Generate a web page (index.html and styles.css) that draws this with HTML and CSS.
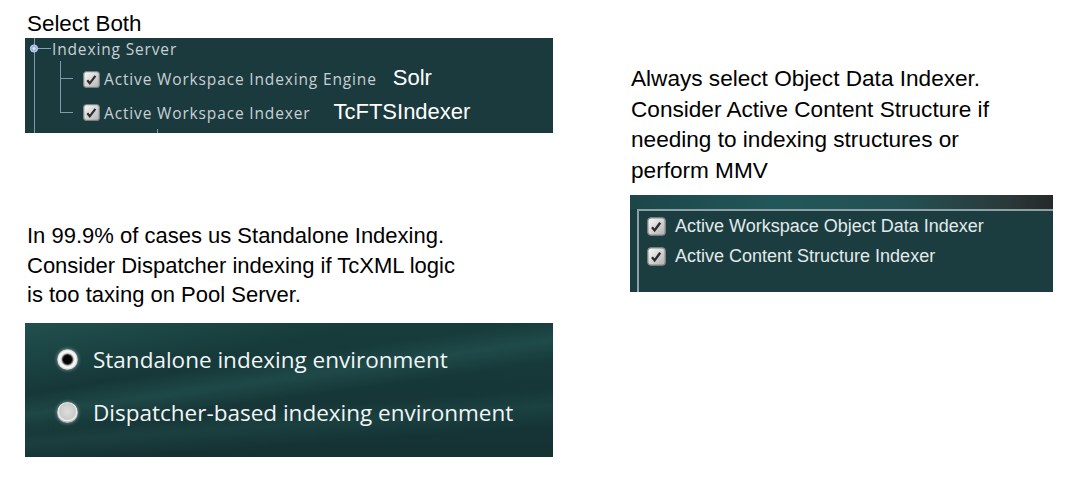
FILE: index.html
```html
<!DOCTYPE html>
<html lang="en">
<head>
<meta charset="utf-8">
<title>Indexing options</title>
<link rel="stylesheet" href="styles.css">
</head>
<body>
<div class="page">
  <div class="col-left">
    <p class="caption">Select Both</p>
    <div class="tree">
      <div class="tree-head">
        <svg class="node" viewBox="0 0 26 22" width="26" height="22">
          <line x1="12" y1="10.5" x2="26" y2="10.5" stroke="#8aa3b6" stroke-width="1"/>
          <circle cx="9" cy="10.5" r="3.6" fill="#9db3e6" stroke="#c9d6f5" stroke-width="1"/>
          <circle cx="9" cy="10.5" r="1.3" fill="#e9eefc"/>
        </svg>
        <span class="tree-label">Indexing Server</span>
      </div>
      <div class="tree-row">
        <svg class="cb cb-sm" viewBox="0 0 17 17" width="17" height="17">
          <defs><linearGradient id="g1" x1="0" y1="0" x2="1" y2="1"><stop offset="0" stop-color="#fbfbfb"/><stop offset="1" stop-color="#b3b3b3"/></linearGradient></defs>
          <rect x="0.75" y="0.75" width="15.5" height="15.5" rx="2.6" fill="url(#g1)" stroke="#8a8a8a" stroke-width="1.2"/>
          <path d="M4.3 9.2 L6.8 12.3 L12.4 4.9" fill="none" stroke="#2e2e2e" stroke-width="2.2"/>
        </svg>
        <span class="tree-label">Active Workspace Indexing Engine</span>
        <span class="annot annot-solr">Solr</span>
      </div>
      <div class="tree-row">
        <svg class="cb cb-sm" viewBox="0 0 17 17" width="17" height="17">
          <defs><linearGradient id="g2" x1="0" y1="0" x2="1" y2="1"><stop offset="0" stop-color="#fbfbfb"/><stop offset="1" stop-color="#b3b3b3"/></linearGradient></defs>
          <rect x="0.75" y="0.75" width="15.5" height="15.5" rx="2.6" fill="url(#g2)" stroke="#8a8a8a" stroke-width="1.2"/>
          <path d="M4.3 9.2 L6.8 12.3 L12.4 4.9" fill="none" stroke="#2e2e2e" stroke-width="2.2"/>
        </svg>
        <span class="tree-label">Active Workspace Indexer</span>
        <span class="annot annot-tc">TcFTSIndexer</span>
      </div>
    </div>

    <p class="note note-left">In 99.9% of cases us Standalone Indexing.<br>Consider Dispatcher indexing if TcXML logic<br>is too taxing on Pool Server.</p>

    <div class="env">
      <div class="env-row">
        <span class="radio radio-on"></span>
        <span class="env-label">Standalone indexing environment</span>
      </div>
      <div class="env-row">
        <span class="radio radio-off"></span>
        <span class="env-label">Dispatcher-based indexing environment</span>
      </div>
    </div>
  </div>

  <div class="col-right">
    <p class="note note-right">Always select Object Data Indexer.<br>Consider Active Content Structure if<br>needing to indexing structures or<br>perform MMV</p>

    <div class="idx">
      <div class="idx-frame">
        <div class="idx-row">
          <svg class="cb cb-lg" viewBox="0 0 19 19" width="19" height="19">
            <defs><linearGradient id="g3" x1="0" y1="0" x2="1" y2="1"><stop offset="0" stop-color="#fdfdfd"/><stop offset="1" stop-color="#adadad"/></linearGradient></defs>
            <rect x="0.8" y="0.8" width="17.4" height="17.4" rx="3.2" fill="url(#g3)" stroke="#858585" stroke-width="1.3"/>
            <path d="M5 10.3 L7.6 13.4 L13.2 5.8" fill="none" stroke="#2b2b2b" stroke-width="2.4"/>
          </svg>
          <span class="idx-label">Active Workspace Object Data Indexer</span>
        </div>
        <div class="idx-row">
          <svg class="cb cb-lg" viewBox="0 0 19 19" width="19" height="19">
            <defs><linearGradient id="g4" x1="0" y1="0" x2="1" y2="1"><stop offset="0" stop-color="#fdfdfd"/><stop offset="1" stop-color="#adadad"/></linearGradient></defs>
            <rect x="0.8" y="0.8" width="17.4" height="17.4" rx="3.2" fill="url(#g4)" stroke="#858585" stroke-width="1.3"/>
            <path d="M5 10.3 L7.6 13.4 L13.2 5.8" fill="none" stroke="#2b2b2b" stroke-width="2.4"/>
          </svg>
          <span class="idx-label">Active Content Structure Indexer</span>
        </div>
      </div>
    </div>
  </div>
</div>
</body>
</html>
```

FILE: styles.css
```css
html, body {
  margin: 0;
  padding: 0;
  background: #ffffff;
}

.page {
  display: flex;
  align-items: flex-start;
  padding-left: 25px;
  gap: 77px;
  font-family: "Liberation Sans", Arial, sans-serif;
  color: #000000;
}

.col-left {
  width: 528px;
  padding-top: 11px;
  display: flex;
  flex-direction: column;
}

.col-right {
  width: 423px;
  padding-top: 64px;
  display: flex;
  flex-direction: column;
}

.caption {
  margin: 0 0 2px 2px;
  font-size: 22.4px;
  line-height: 25px;
  white-space: nowrap;
}

.note {
  margin: 0;
  white-space: nowrap;
}

.note-left {
  margin: 88px 0 0 2px;
  font-size: 22px;
  line-height: 29.5px;
}

.note-right {
  margin: 0 0 0 1px;
  font-size: 22.6px;
  line-height: 30.5px;
}

/* ---------- Panel 1: tree ---------- */
.tree {
  height: 95px;
  box-sizing: border-box;
  background:
    linear-gradient(#7f99ad, #7f99ad) 9px 0 / 1px 100% no-repeat,
    linear-gradient(#7f99ad, #7f99ad) 35px 23px / 1px 52px no-repeat,
    linear-gradient(#7f99ad, #7f99ad) 35px 40px / 13px 1px no-repeat,
    linear-gradient(#7f99ad, #7f99ad) 35px 74px / 13px 1px no-repeat,
    linear-gradient(#7f99ad, #7f99ad) 132px 91px / 1px 4px no-repeat,
    #1b3a3e;
  display: flex;
  flex-direction: column;
}

.tree-head {
  height: 23px;
  display: flex;
  align-items: flex-start;
}

.node {
  flex: none;
  display: block;
}

.tree-label {
  font-family: "Open Sans", "Noto Sans", sans-serif;
  font-size: 15.5px;
  letter-spacing: 0.85px;
  color: #c8d0d4;
  line-height: 22px;
  white-space: nowrap;
}

.tree-head .tree-label {
  margin-left: 1px;
}

.tree-row {
  height: 33.5px;
  display: flex;
  align-items: baseline;
  padding-left: 58px;
  line-height: 33.5px;
}

.tree-row .tree-label {
  line-height: 33.5px;
  margin-left: 4px;
}

.cb {
  flex: none;
  display: block;
}

.cb-sm {
  align-self: flex-start;
  margin-top: 9.5px;
}

.annot {
  font-family: "Liberation Sans", Arial, sans-serif;
  font-size: 22px;
  color: #ffffff;
  white-space: nowrap;
}

.annot-solr { margin-left: 16px; }
.annot-tc { margin-left: 23px; }

/* ---------- Panel 3: environment radios ---------- */
.env {
  margin-top: 13.5px;
  height: 134px;
  box-sizing: border-box;
  padding: 10px 0 0 32px;
  background:
    linear-gradient(168deg, rgba(44, 104, 100, 0.45) 0%, rgba(44, 104, 100, 0) 30%),
    linear-gradient(172deg, rgba(0, 0, 0, 0) 34%, rgba(52, 118, 112, 0.28) 44%, rgba(0, 0, 0, 0) 54%),
    linear-gradient(176deg, rgba(0, 0, 0, 0) 60%, rgba(48, 110, 104, 0.2) 70%, rgba(0, 0, 0, 0) 82%),
    linear-gradient(180deg, #173c3c 0%, #163637 60%, #153233 100%);
}

.env-row {
  height: 53px;
  display: flex;
  align-items: center;
}

.radio {
  flex: none;
  width: 21px;
  height: 21px;
  border-radius: 50%;
  box-shadow: 0 0 3px 1px rgba(220, 235, 235, 0.3);
}

.radio-on {
  background: radial-gradient(circle, #050505 0 4px, #4a4a4a 5px, #d9d9d9 6.3px, #ffffff 7.8px, #e2e2e2 9.4px, #a9a9a9 10.5px);
}

.radio-off {
  background: radial-gradient(circle at 50% 45%, #dedede 0, #d2d2d2 5px, #c9c9c9 7.8px, #f0f0f0 9.4px, #b8b8b8 10.5px);
}

.env-label {
  margin-left: 15px;
  font-family: "Open Sans", "Noto Sans", sans-serif;
  font-size: 22.5px;
  line-height: 53px;
  color: #f1f5f5;
  white-space: nowrap;
}

/* ---------- Panel 2: indexers ---------- */
.idx {
  margin-top: 9px;
  height: 97px;
  box-sizing: border-box;
  padding: 14px 0 0 7px;
  overflow: hidden;
  background:
    linear-gradient(90deg, #1c4749 0%, #225759 35%, #245052 65%, #2a3a3b 88%, #26292a 100%) 0 0 / 100% 14px no-repeat,
    #1b3d3f;
}

.idx-frame {
  height: 100%;
  box-sizing: border-box;
  border-top: 2px solid #8ba1a7;
  border-left: 2px solid #8ba1a7;
  padding-left: 8px;
}

.idx-row {
  height: 30px;
  display: flex;
  align-items: center;
}

.idx-label {
  margin-left: 9px;
  font-family: "Liberation Sans", Arial, sans-serif;
  font-size: 18px;
  line-height: 30px;
  color: #e2eaec;
  white-space: nowrap;
}
```
